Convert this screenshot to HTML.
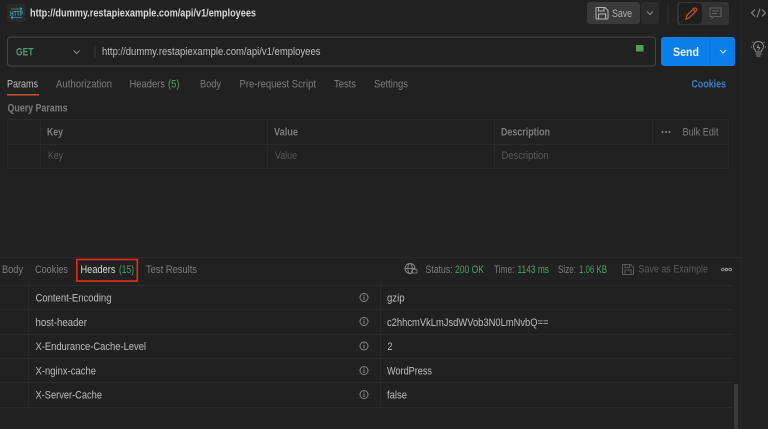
<!DOCTYPE html>
<html><head><meta charset="utf-8"><title>Postman</title>
<style>
html,body{margin:0;padding:0;background:#212121;width:768px;height:429px;overflow:hidden}
svg{display:block}
text{font-family:"Liberation Sans",sans-serif;font-size:10.6px;fill:#9a9a9a;filter:url(#b)}
.w{fill:#d8d8d8}.g{fill:#4f9d6f}.d{fill:#585858}.t{fill:#bdbdbd}.m{fill:#7d7d7d}
</style></head><body>
<svg width="768" height="429" viewBox="0 0 768 429" xmlns="http://www.w3.org/2000/svg">
<defs><filter id="b" x="-5%" y="-30%" width="110%" height="160%"><feGaussianBlur stdDeviation="0.35"/></filter></defs>
<rect width="768" height="429" fill="#212121"/>
<line x1="741" y1="0" x2="741" y2="429" stroke="#2a2a2a"/>

<!-- top bar -->
<rect x="7" y="4" width="19" height="18" rx="3" fill="#2a2a2a"/>
<text x="10" y="16" textLength="13" lengthAdjust="spacingAndGlyphs" style="font-size:7.5px;font-weight:bold;fill:#3f9aa8">HTTP</text>
<path d="M11 9h11M20 7.500l2 1.500-2 1.500M22 17.500H11M13 16l-2 1.500 2 1.500" fill="none" stroke="#3f9aa8" stroke-width=".8"/>
<text x="30" y="16.500" textLength="226" lengthAdjust="spacingAndGlyphs" class="w" style="font-weight:bold">http://dummy.restapiexample.com/api/v1/employees</text>

<rect x="587" y="2" width="53" height="22" rx="3" fill="#3a3a3a"/>
<rect x="641" y="2" width="18" height="22" rx="3" fill="#2c2c2c"/>
<path d="M596 8.500a1 1 0 0 1 1-1h8l3 3v7.500a1 1 0 0 1-1 1h-10a1 1 0 0 1-1-1zM598.500 7.500v3.500h5.500v-3.500M598.500 19v-5h7v5" fill="none" stroke="#b5b5b5"/>
<text x="612" y="17" textLength="20" lengthAdjust="spacingAndGlyphs" style="fill:#b0b0b0">Save</text>
<path d="M647 11.500l3 3 3-3" fill="none" stroke="#8f8f8f"/>
<line x1="668" y1="3" x2="668" y2="25" stroke="#2f2f2f"/>
<rect x="677" y="2" width="52" height="23" rx="3" fill="#333"/>
<rect x="679" y="3" width="23" height="21" rx="3" fill="#1f1f1f"/>
<path d="M686 19l.8-3.500 7-7a1.400 1.400 0 0 1 2.400 2.400l-7 7zM693 9.500l2.200 2.200" fill="none" stroke="#b8502c" stroke-width="1.300"/>
<path d="M710 8h11v8.500h-7l-2 1.800v-1.800h-2zM712 11h7M712 13.500h5" fill="none" stroke="#5f5f5f"/>
<path d="M755 9.500l-3.500 3.500 3.500 3.500M762 9.500l3.500 3.500-3.500 3.500M760 8.500l-3 9" fill="none" stroke="#8f8f8f"/>
<path d="M755.500 54h6M756 52c0-2-2.500-2.500-2.500-5.500a5 5 0 0 1 10 0c0 3-2.500 3.500-2.500 5.500zM756.500 56h4M758.500 44.500l-1.200 3h2.400l-1.200 3M751 47h1M765 47h1M752.500 42l.8.8M764.500 42l-.8.800" fill="none" stroke="#8f8f8f"/>

<!-- URL bar -->
<rect x="7.500" y="37" width="648" height="29" rx="3" fill="#212121" stroke="#454545"/>
<text x="16" y="55.500" textLength="17.500" lengthAdjust="spacingAndGlyphs" class="g" style="font-weight:bold">GET</text>
<path d="M73.500 50.500l3 3 3-3" fill="none" stroke="#8a8a8a"/>
<line x1="95" y1="45" x2="95" y2="58" stroke="#3a3a3a"/>
<text x="102" y="55.200" textLength="218.500" lengthAdjust="spacingAndGlyphs" class="t">http://dummy.restapiexample.com/api/v1/employees</text>
<rect x="636" y="45" width="7.500" height="6.500" fill="#4c9f5c"/>
<rect x="661" y="37" width="74" height="29" rx="3" fill="#0a7fe9"/>
<line x1="710" y1="37" x2="710" y2="66" stroke="#0a72d2"/>
<text x="673" y="55.800" textLength="26" lengthAdjust="spacingAndGlyphs" style="font-weight:bold;font-size:11.5px;fill:#f0f6fc">Send</text>
<path d="M720 50l3 3 3-3" fill="none" stroke="#e6f0fa"/>

<!-- request tabs -->
<text x="7" y="87.500" textLength="31" lengthAdjust="spacingAndGlyphs" class="t">Params</text>
<text x="56" y="87.500" textLength="56" lengthAdjust="spacingAndGlyphs" class="m">Authorization</text>
<text x="129.500" y="87.500" textLength="35.500" lengthAdjust="spacingAndGlyphs" class="m">Headers</text>
<text x="168" y="87.500" textLength="11.500" lengthAdjust="spacingAndGlyphs" class="g">(5)</text>
<text x="200" y="87.500" textLength="21" lengthAdjust="spacingAndGlyphs" class="m">Body</text>
<text x="239.500" y="87.500" textLength="76.500" lengthAdjust="spacingAndGlyphs" class="m">Pre-request Script</text>
<text x="334" y="87.500" textLength="22" lengthAdjust="spacingAndGlyphs" class="m">Tests</text>
<text x="374" y="87.500" textLength="34" lengthAdjust="spacingAndGlyphs" class="m">Settings</text>
<text x="691.500" y="87.500" textLength="34.500" lengthAdjust="spacingAndGlyphs" style="fill:#3a7fc2;font-weight:bold">Cookies</text>
<rect x="7" y="94" width="32" height="1.500" fill="#c2562f"/>

<!-- params table -->
<text x="7.500" y="111.500" textLength="60" lengthAdjust="spacingAndGlyphs" class="m" style="font-weight:bold">Query Params</text>
<g fill="none" stroke="#2a2a2a">
<rect x="7.500" y="119.500" width="721" height="49"/>
<path d="M7.500 144.500H728.500M40.500 119.500v49M267.500 119.500v49M494.500 119.500v49M652.500 119.500v25"/>
</g>
<text x="47" y="135.500" textLength="16" lengthAdjust="spacingAndGlyphs" class="m" style="font-weight:bold">Key</text>
<text x="274" y="135.500" textLength="24" lengthAdjust="spacingAndGlyphs" class="m" style="font-weight:bold">Value</text>
<text x="501" y="135.500" textLength="49" lengthAdjust="spacingAndGlyphs" class="m" style="font-weight:bold">Description</text>
<g fill="#8a8a8a"><circle cx="662.500" cy="132" r="1"/><circle cx="666" cy="132" r="1"/><circle cx="669.500" cy="132" r="1"/></g>
<text x="682.500" y="135.500" textLength="36" lengthAdjust="spacingAndGlyphs" class="m">Bulk Edit</text>
<text x="48" y="159" textLength="15" lengthAdjust="spacingAndGlyphs" class="d">Key</text>
<text x="275" y="159" textLength="22" lengthAdjust="spacingAndGlyphs" class="d">Value</text>
<text x="501.500" y="159" textLength="47" lengthAdjust="spacingAndGlyphs" class="d">Description</text>

<!-- response -->
<line x1="0" y1="257.500" x2="741" y2="257.500" stroke="#2a2a2a"/>
<text x="2" y="273" textLength="21" lengthAdjust="spacingAndGlyphs" class="m">Body</text>
<text x="35" y="273" textLength="33" lengthAdjust="spacingAndGlyphs" class="m">Cookies</text>
<text x="80.500" y="273" textLength="35" lengthAdjust="spacingAndGlyphs" class="w">Headers</text>
<text x="119" y="273" textLength="15" lengthAdjust="spacingAndGlyphs" class="g">(15)</text>
<rect x="76.800" y="259.500" width="60.500" height="21.500" fill="none" stroke="#e62e17" stroke-width="1.600"/>
<text x="146" y="273" textLength="51" lengthAdjust="spacingAndGlyphs" class="m">Test Results</text>

<g fill="none" stroke="#8a8a8a" stroke-width=".9">
<circle cx="410" cy="268.500" r="5"/><ellipse cx="410" cy="268.500" rx="2.200" ry="5"/><path d="M405 268.500h10"/>
</g>
<rect x="412.500" y="269.500" width="4.500" height="3.500" rx=".5" fill="#212121" stroke="#8a8a8a" stroke-width=".8"/>
<text x="425.500" y="273" textLength="27" lengthAdjust="spacingAndGlyphs" class="m">Status:</text>
<text x="455" y="273" textLength="29" lengthAdjust="spacingAndGlyphs" class="g">200 OK</text>
<text x="494" y="273" textLength="20.500" lengthAdjust="spacingAndGlyphs" class="m">Time:</text>
<text x="517.500" y="273" textLength="31.500" lengthAdjust="spacingAndGlyphs" class="g">1143 ms</text>
<text x="558" y="273" textLength="18" lengthAdjust="spacingAndGlyphs" class="m">Size:</text>
<text x="579" y="273" textLength="28" lengthAdjust="spacingAndGlyphs" class="g">1.06 KB</text>
<path d="M622.500 264.500h8l3 3v6.500a.5.5 0 0 1-.5.5h-10.500zM625 264.500v3h4.500v-3M625 274.500v-4.500h6v4.500" fill="none" stroke="#5a5a5a"/>
<text x="638.500" y="272.500" textLength="69.500" lengthAdjust="spacingAndGlyphs" class="d">Save as Example</text>
<g fill="none" stroke="#8a8a8a" stroke-width="1"><circle cx="722.800" cy="269.500" r="1.300"/><circle cx="726.500" cy="269.500" r="1.300"/><circle cx="730.200" cy="269.500" r="1.300"/></g>

<g fill="none" stroke="#2a2a2a">
<path d="M0 285.500H732M0 309.500H732M0 334.500H732M0 358.500H732M0 382.500H732M0 407.500H732M28.500 282V407M380.500 282V407"/>
</g>
<text x="35.500" y="301.500" textLength="76" lengthAdjust="spacingAndGlyphs" class="t">Content-Encoding</text>
<text x="35.500" y="325.800" textLength="51.500" lengthAdjust="spacingAndGlyphs" class="t">host-header</text>
<text x="35.500" y="350" textLength="110.500" lengthAdjust="spacingAndGlyphs" class="t">X-Endurance-Cache-Level</text>
<text x="35.500" y="374.300" textLength="60.500" lengthAdjust="spacingAndGlyphs" class="t">X-nginx-cache</text>
<text x="35.500" y="398.500" textLength="66.500" lengthAdjust="spacingAndGlyphs" class="t">X-Server-Cache</text>
<g fill="none" stroke="#858585">
<circle cx="364" cy="297.500" r="4"/><path d="M364 296.500v3.500M364 294.800v1"/>
<circle cx="364" cy="321.500" r="4"/><path d="M364 320.500v3.500M364 318.800v1"/>
<circle cx="364" cy="346" r="4"/><path d="M364 345v3.500M364 343.300v1"/>
<circle cx="364" cy="370.500" r="4"/><path d="M364 369.500v3.500M364 367.800v1"/>
<circle cx="364" cy="394.500" r="4"/><path d="M364 393.500v3.500M364 391.800v1"/>
</g>
<text x="387" y="301.500" textLength="17.500" lengthAdjust="spacingAndGlyphs" class="t">gzip</text>
<text x="387" y="325.800" textLength="161.500" lengthAdjust="spacingAndGlyphs" class="t">c2hhcmVkLmJsdWVob3N0LmNvbQ==</text>
<text x="387.500" y="350" textLength="5" lengthAdjust="spacingAndGlyphs" class="t">2</text>
<text x="387" y="374.300" textLength="45" lengthAdjust="spacingAndGlyphs" class="t">WordPress</text>
<text x="387" y="398.500" textLength="20" lengthAdjust="spacingAndGlyphs" class="t">false</text>
<rect x="734" y="384" width="4" height="45" rx="1.500" fill="#3a3a3a"/>
</svg>
</body></html>
